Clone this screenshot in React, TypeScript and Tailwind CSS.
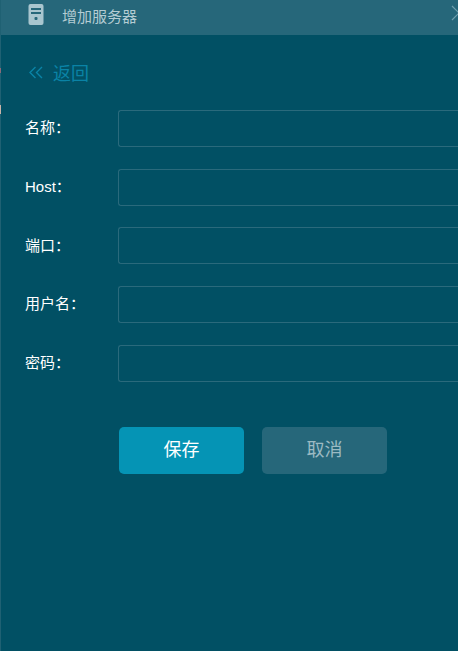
import React from 'react';

const FONT = "font-['Liberation_Sans','Noto_Sans_CJK_SC',sans-serif]";

const fields = ['名称：', 'Host：', '端口：', '用户名：', '密码：'];

const App: React.FC = () => {
  return (
    <div className={`${FONT} w-[458px] h-[651px] bg-[#015064] border-l border-[#1f6173] relative`}>
      {/* bits of the page behind the dialog */}
      <div className="absolute left-[-1px] top-[68px] w-px h-[5px] bg-[#8a6a78]" />
      <div className="absolute left-[-1px] top-[105px] w-px h-[9px] bg-[#c9b3a8]" />

      {/* Header */}
      <div className="h-[35px] bg-[#26677a] flex items-center">
        <svg className="ml-[27px] mb-[7px]" width="16" height="21" viewBox="0 0 16 21">
          <rect x="0.5" y="0" width="15" height="21" rx="2" fill="#a9c6cf" />
          <rect x="3" y="4" width="10" height="2" fill="#26677a" />
          <rect x="3" y="8" width="10" height="2" fill="#26677a" />
          <rect x="6.5" y="13" width="3" height="3" rx="1" fill="#26677a" />
        </svg>
        <span className="ml-[18px] mb-[1px] text-[15px] text-[#b4ccd3]">增加服务器</span>
        <svg className="absolute left-[450px] top-[5px]" width="7" height="16" viewBox="0 0 7 16" fill="none" stroke="#6f9fae" strokeWidth="1.2">
          <path d="M1 1 L8 8 L1 15" />
        </svg>
      </div>

      {/* Back link */}
      <div className="h-[75px] flex items-start pt-[28px] pl-[28px]">
        <svg className="mt-[3px]" width="14" height="14" viewBox="0 0 14 14" fill="none" stroke="#0a83a6" strokeWidth="1.4">
          <path d="M6.5 1 L1 6.5 L6.5 12" />
          <path d="M13 1 L7.5 6.5 L13 12" />
        </svg>
        <span className="ml-[10px] text-[18px] leading-[22px] text-[#0a83a6]">返回</span>
      </div>

      {/* Form */}
      <div className="flex flex-col gap-[21.7px]">
        {fields.map((label) => (
          <div key={label} className="flex items-center h-[37px]">
            <label className="w-[117px] pl-[24px] text-[15px] text-white">{label}</label>
            <input className="flex-1 h-full min-w-0 rounded-l-[3px] border border-r-0 border-[#2a6a7c] bg-transparent" />
          </div>
        ))}
      </div>

      {/* Buttons */}
      <div className="flex gap-[18px] mt-[45.2px] ml-[118px]">
        <button className="w-[125px] h-[47px] rounded-[5px] bg-[#0594b5] text-[18px] text-white">保存</button>
        <button className="w-[125px] h-[47px] rounded-[5px] bg-[#26677a] text-[18px] text-[#9cbac3]">取消</button>
      </div>
    </div>
  );
};

export default App;
